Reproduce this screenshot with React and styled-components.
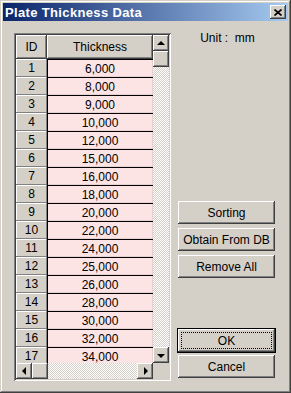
import React from "react";
import styled, { createGlobalStyle, css } from "styled-components";

const Global = createGlobalStyle`
  html, body { margin: 0; padding: 0; background: #d4d0c8; }
  #root { width: 291px; height: 393px; }
  * { box-sizing: border-box; }
`;

const raised = css`
  background: #d4d0c8;
  box-shadow: inset -1px -1px 0 #404040, inset 1px 1px 0 #ffffff,
    inset -2px -2px 0 #808080, inset 2px 2px 0 #d4d0c8;
`;

const checker = css`
  background-color: #ffffff;
  background-image: conic-gradient(#d4d0c8 25%, #ffffff 0 50%, #d4d0c8 0 75%, #ffffff 0);
  background-size: 2px 2px;
`;

const Window = styled.div`
  width: 291px;
  height: 393px;
  padding: 3px;
  background: #d4d0c8;
  box-shadow: inset -1px -1px 0 #404040, inset 1px 1px 0 #d4d0c8,
    inset -2px -2px 0 #808080, inset 2px 2px 0 #ffffff;
  font-family: "Liberation Sans", Arial, sans-serif;
  font-size: 12px;
  color: #000;
  display: flex;
  flex-direction: column;
`;

const TitleBar = styled.div`
  height: 18px;
  background: linear-gradient(to right, #0a246a, #a6caf0);
  display: flex;
  align-items: center;
  justify-content: space-between;
  padding: 0 2px 0 2px;
`;

const TitleText = styled.span`
  color: #fff;
  font-weight: bold;
  font-size: 13px;
  letter-spacing: 0.35px;
`;

const CloseBtn = styled.div`
  ${raised};
  width: 16px;
  height: 14px;
  display: flex;
  align-items: center;
  justify-content: center;
`;

const Body = styled.div`
  display: flex;
  padding: 12px 0 0 11px;
`;

const GridFrame = styled.div`
  width: 157px;
  height: 348px;
  padding: 2px;
  background: #d4d0c8;
  box-shadow: inset 1px 1px 0 #808080, inset -1px -1px 0 #ffffff,
    inset 2px 2px 0 #404040, inset -2px -2px 0 #d4d0c8;
  display: grid;
  grid-template-columns: 137px 16px;
  grid-template-rows: 328px 16px;
`;

const RowsArea = styled.div`
  overflow: hidden;
  background: #d4d0c8;
`;

const HeaderRow = styled.div`
  display: flex;
  height: 24px;
`;

const HeadCell = styled.div`
  ${raised};
  width: ${(p) => p.$w}px;
  display: flex;
  align-items: center;
  justify-content: center;
  font-size: 12px;
`;

const Row = styled.div`
  display: flex;
  height: 18px;
  flex-shrink: 0;
`;

const IdCell = styled.div`
  width: 31px;
  background: #d4d0c8;
  box-shadow: inset -1px -1px 0 #808080, inset 1px 1px 0 #ffffff;
  display: flex;
  align-items: center;
  justify-content: center;
`;

const ValCell = styled.div`
  width: 106px;
  background: #fce4e4;
  box-shadow: inset 1px 1px 0 #000000, inset -1px -1px 0 #e8d0d0;
  display: flex;
  align-items: center;
  justify-content: center;
  padding-top: 1px;
`;

const VScroll = styled.div`
  display: flex;
  flex-direction: column;
`;

const HScroll = styled.div`
  display: flex;
`;

const Track = styled.div`
  ${checker};
  flex: 1;
`;

const ScrollBtn = styled.div`
  ${raised};
  width: 16px;
  height: 16px;
  flex-shrink: 0;
  display: flex;
  align-items: center;
  justify-content: center;
`;

const Tri = styled.span`
  width: 0;
  height: 0;
  ${(p) =>
    p.$dir === "up" &&
    css`
      border-left: 4px solid transparent;
      border-right: 4px solid transparent;
      border-bottom: 4px solid #000;
      margin-top: -1px;
    `}
  ${(p) =>
    p.$dir === "down" &&
    css`
      border-left: 4px solid transparent;
      border-right: 4px solid transparent;
      border-top: 4px solid #000;
      margin-top: 1px;
    `}
  ${(p) =>
    p.$dir === "left" &&
    css`
      border-top: 4px solid transparent;
      border-bottom: 4px solid transparent;
      border-right: 4px solid #000;
      margin-left: -1px;
    `}
  ${(p) =>
    p.$dir === "right" &&
    css`
      border-top: 4px solid transparent;
      border-bottom: 4px solid transparent;
      border-left: 4px solid #000;
      margin-left: 1px;
    `}
`;

const Corner = styled.div`
  background: #d4d0c8;
`;

const Side = styled.div`
  width: 99px;
  margin-left: 6px;
  display: flex;
  flex-direction: column;
`;

const Unit = styled.div`
  height: 14px;
  line-height: 14px;
  margin-top: -2px;
  text-align: center;
  white-space: pre;
  padding-left: 2px;
`;

const Group = styled.div`
  display: flex;
  flex-direction: column;
  gap: ${(p) => p.$gap}px;
  margin-top: ${(p) => p.$top}px;
`;

const Button = styled.div`
  ${raised};
  position: relative;
  width: 97px;
  height: 23px;
  margin: 0 1px;
  display: flex;
  align-items: center;
  justify-content: center;
  font-size: 12px;
  padding-top: 1px;
  ${(p) =>
    p.$default &&
    css`
      width: 99px;
      height: 25px;
      margin: 0;
      border: 1px solid #000;
      &::after {
        content: "";
        position: absolute;
        inset: 3px;
        border: 1px dotted #000;
      }
    `}
`;

const values = [
  "6,000", "8,000", "9,000", "10,000", "12,000", "15,000", "16,000", "18,000",
  "20,000", "22,000", "24,000", "25,000", "26,000", "28,000", "30,000", "32,000", "34,000",
];

export default function App() {
  return (
    <>
      <Global />
      <Window>
        <TitleBar>
          <TitleText>Plate Thickness Data</TitleText>
          <CloseBtn>
            <svg width="8" height="7" viewBox="0 0 8 7">
              <path d="M0.5 0.5 L7.5 6.5 M7.5 0.5 L0.5 6.5" stroke="#000" strokeWidth="1.6" />
            </svg>
          </CloseBtn>
        </TitleBar>
        <Body>
          <GridFrame>
            <RowsArea>
              <HeaderRow>
                <HeadCell $w={31}>ID</HeadCell>
                <HeadCell $w={106}>Thickness</HeadCell>
              </HeaderRow>
              {values.map((v, i) => (
                <Row key={i}>
                  <IdCell>{i + 1}</IdCell>
                  <ValCell>{v}</ValCell>
                </Row>
              ))}
            </RowsArea>
            <VScroll>
              <ScrollBtn><Tri $dir="up" /></ScrollBtn>
              <ScrollBtn />
              <Track />
              <ScrollBtn><Tri $dir="down" /></ScrollBtn>
            </VScroll>
            <HScroll>
              <ScrollBtn><Tri $dir="left" /></ScrollBtn>
              <ScrollBtn />
              <Track />
              <ScrollBtn><Tri $dir="right" /></ScrollBtn>
            </HScroll>
            <Corner />
          </GridFrame>
          <Side>
            <Unit>{"Unit :  mm"}</Unit>
            <Group $gap={4} $top={156}>
              <Button>Sorting</Button>
              <Button>Obtain From DB</Button>
              <Button>Remove All</Button>
            </Group>
            <Group $gap={2} $top={50}>
              <Button $default>OK</Button>
              <Button>Cancel</Button>
            </Group>
          </Side>
        </Body>
      </Window>
    </>
  );
}
